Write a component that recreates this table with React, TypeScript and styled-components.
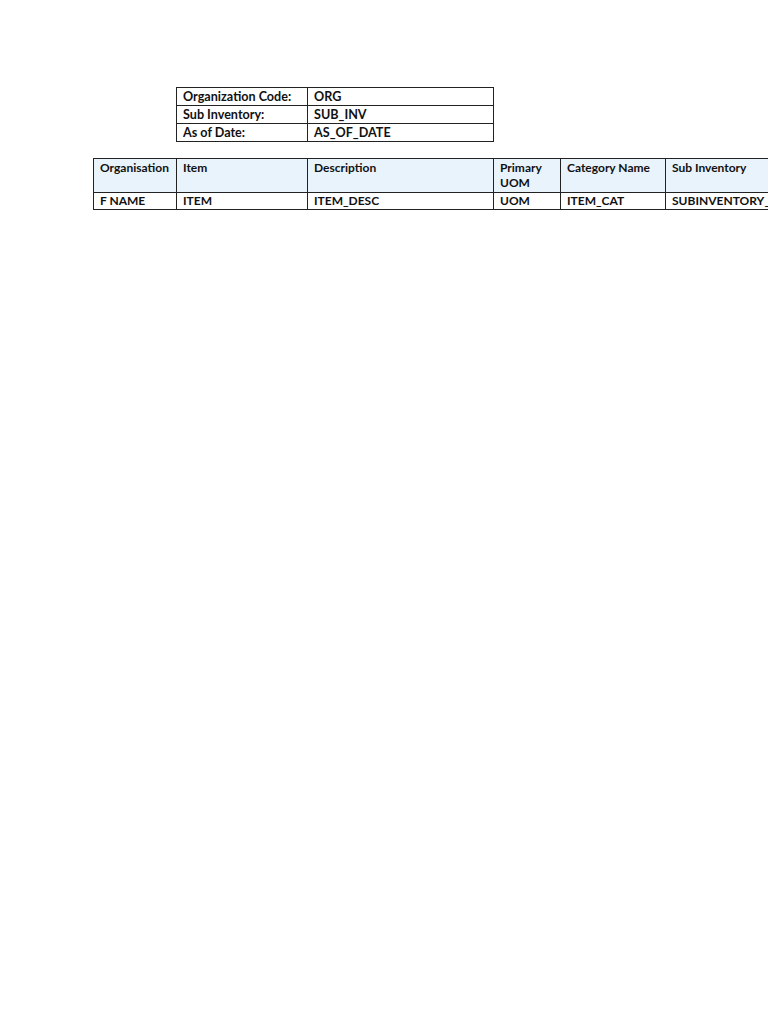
import React from "react";
import styled, { createGlobalStyle } from "styled-components";

const Global = createGlobalStyle`
  html, body {
    margin: 0;
    padding: 0;
    background: #fff;
    overflow: hidden;
  }
  body {
    font-family: Lato, "Liberation Sans", sans-serif;
    font-weight: 700;
    font-size: 12px;
    color: #111;
  }
`;

const Page = styled.div`
  width: 768px;
  height: 1024px;
  padding-top: 87px;
  box-sizing: border-box;
  overflow: hidden;
`;

const ParamTable = styled.table`
  border-collapse: collapse;
  margin-left: 176px;
  table-layout: fixed;
  font-size: 12.6px;
`;

const ParamCell = styled.td`
  border: 1px solid #222;
  height: 17px;
  padding: 0 6px;
  line-height: 16px;
  white-space: nowrap;
`;

const Col = styled.col<{ $width: number }>`
  width: ${(p) => p.$width}px;
`;

const GridTable = styled.table`
  border-collapse: collapse;
  margin-left: 93px;
  margin-top: 16px;
  table-layout: fixed;
  width: 800px;
`;

const HeadCell = styled.th<{ $wrap?: boolean }>`
  border: 1px solid #222;
  background: #e8f3fc;
  height: 32px;
  padding: 1px 6px 0;
  line-height: 15px;
  text-align: left;
  vertical-align: top;
  overflow: hidden;
  font-weight: 700;
  white-space: ${(p) => (p.$wrap ? "normal" : "nowrap")};
`;

const DataCell = styled.td`
  border: 1px solid #222;
  height: 16px;
  padding: 0 6px;
  line-height: 15px;
  vertical-align: top;
  overflow: hidden;
  white-space: nowrap;
`;

const params = [
  ["Organization Code:", "ORG"],
  ["Sub Inventory:", "SUB_INV"],
  ["As of Date:", "AS_OF_DATE"],
];

const columns = [
  { title: "Organisation", width: 83, value: "F NAME" },
  { title: "Item", width: 131, value: "ITEM" },
  { title: "Description", width: 186, value: "ITEM_DESC" },
  { title: "Primary UOM", width: 67, value: "UOM", wrap: true },
  { title: "Category Name", width: 105, value: "ITEM_CAT" },
  { title: "Sub Inventory", width: 228, value: "SUBINVENTORY_CODE" },
];

export default function App() {
  return (
    <Page>
      <Global />
      <ParamTable>
        <colgroup>
          <Col $width={131} />
          <Col $width={186} />
        </colgroup>
        <tbody>
          {params.map(([k, v]) => (
            <tr key={k}>
              <ParamCell>{k}</ParamCell>
              <ParamCell>{v}</ParamCell>
            </tr>
          ))}
        </tbody>
      </ParamTable>
      <GridTable>
        <colgroup>
          {columns.map((c) => (
            <Col key={c.title} $width={c.width} />
          ))}
        </colgroup>
        <thead>
          <tr>
            {columns.map((c) => (
              <HeadCell key={c.title} $wrap={c.wrap}>
                {c.title}
              </HeadCell>
            ))}
          </tr>
        </thead>
        <tbody>
          <tr>
            {columns.map((c) => (
              <DataCell key={c.title}>{c.value}</DataCell>
            ))}
          </tr>
        </tbody>
      </GridTable>
    </Page>
  );
}
